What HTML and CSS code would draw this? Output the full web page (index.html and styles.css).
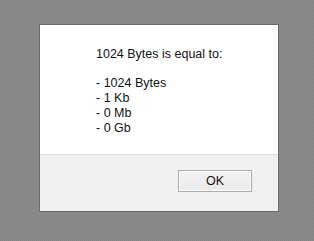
FILE: index.html
```html
<!DOCTYPE html>
<html lang="en">
<head>
  <meta charset="UTF-8" />
  <title>Byte Converter</title>
  <link rel="stylesheet" href="styles.css">
</head>
<body>
  <!-- Alert Dialog -->
  <div class="dialog">
    <div class="dialog-body">
      <p>1024 Bytes is equal to:</p>
      <ul class="results">
        <li>- 1024 Bytes</li>
        <li>- 1 Kb</li>
        <li>- 0 Mb</li>
        <li>- 0 Gb</li>
      </ul>
    </div>
    <div class="dialog-footer">
      <button class="ok-btn">OK</button>
    </div>
  </div>
</body>
</html>
```

FILE: styles.css
```css
:root {
  --bg-dark: #848484;
  --bg-light: #8d8d8d;
  --footer-bg: #f0f0f0;
  --text: #111;
}

* {
  margin: 0;
  padding: 0;
  box-sizing: border-box;
}

body {
  font-family: Arial, 'Liberation Sans', sans-serif;
  font-size: 12.5px;
  color: var(--text);
  height: 241px;
  padding: 24px 0 0 39px;
  background-color: var(--bg-dark);
  background-image: conic-gradient(var(--bg-light) 25%, var(--bg-dark) 0 50%, var(--bg-light) 0 75%, var(--bg-dark) 0);
  background-size: 2px 2px;
}

.dialog {
  width: 240px;
  height: 188px;
  background: #fff;
  border: 1px solid #6b6b6b;
  display: flex;
  flex-direction: column;
}

.dialog-body {
  height: 129px;
  padding: 22px 0 0 56px;
  line-height: 14.7px;
}

.results {
  list-style: none;
  margin-top: 14.7px;
}

.dialog-footer {
  flex: 1;
  background: var(--footer-bg);
  border-top: 1px solid #dfdfdf;
  display: flex;
  justify-content: flex-end;
  align-items: flex-start;
  padding: 15px 26px 0 0;
}

.ok-btn {
  width: 74px;
  height: 22px;
  font-family: inherit;
  font-size: 12.5px;
  color: var(--text);
  background: linear-gradient(#f2f2f2, #ebebeb);
  border: 1px solid #acacac;
  box-shadow: inset 0 0 0 1px #fcfcfc;
  cursor: pointer;
}
```
